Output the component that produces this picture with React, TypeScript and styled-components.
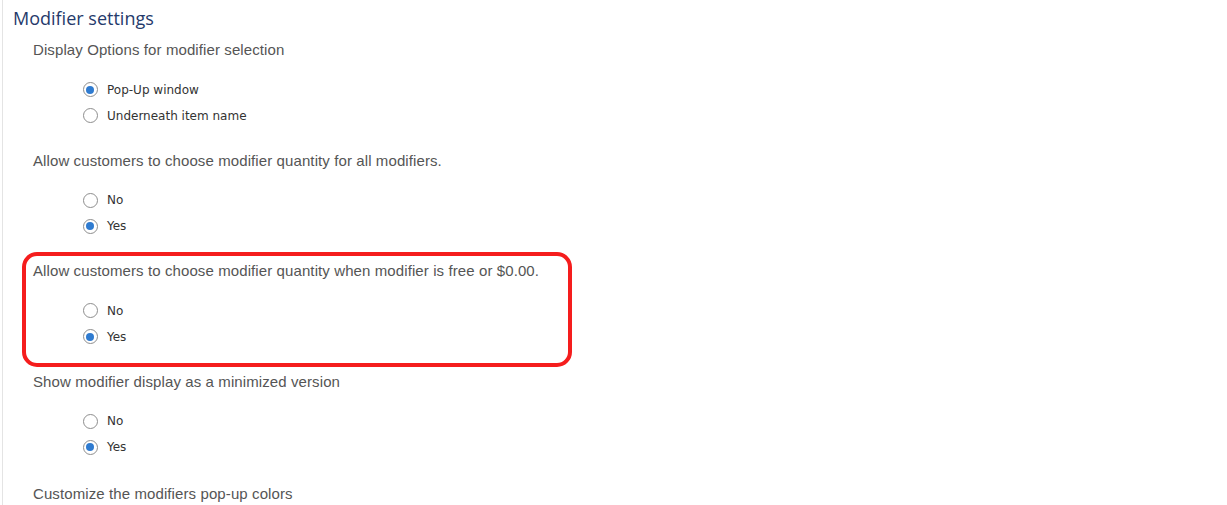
import React from "react";
import styled, { createGlobalStyle } from "styled-components";

const Global = createGlobalStyle`
  html, body { margin: 0; padding: 0; background: #fff; }
  body { font-family: "Liberation Sans", Arial, sans-serif; }
`;

const Page = styled.div`
  margin-left: 2px;
  border-left: 1px solid #e4e4e4;
  min-height: 505px;
  box-sizing: border-box;
  padding-top: 6px;
`;

const Title = styled.h2`
  margin: 0 0 10px 10px;
  font-family: "Open Sans", "Noto Sans", sans-serif;
  font-weight: 400;
  font-size: 18px;
  line-height: 24px;
  color: #253a6b;
`;

const List = styled.div`
  display: flex;
  flex-direction: column;
  gap: 22px;
  margin-left: 30px;
`;

const Section = styled.section<{ $highlight?: boolean }>`
  position: relative;
  width: 520px;
  &:last-child {
    margin-top: 1.5px;
  }
  &::after {
    content: "";
    display: ${(p) => (p.$highlight ? "block" : "none")};
    position: absolute;
    left: -11px;
    top: -9px;
    bottom: -17px;
    width: 550px;
    box-sizing: border-box;
    border: 4px solid #f51d1d;
    border-radius: 15px;
    pointer-events: none;
  }
`;

const Question = styled.div`
  font-size: 15px;
  letter-spacing: 0.1px;
  line-height: 20px;
  color: #555;
  white-space: nowrap;
`;

const Options = styled.div`
  margin-top: 16.5px;
  margin-left: 49.5px;
  display: flex;
  flex-direction: column;
`;

const Option = styled.label`
  display: flex;
  align-items: center;
  height: 26px;
  gap: 9.5px;
  font-family: "DejaVu Sans", Verdana, sans-serif;
  font-size: 12px;
  color: #333;
`;

const Dot = styled.span<{ $checked?: boolean }>`
  width: 15px;
  height: 15px;
  box-sizing: border-box;
  border-radius: 50%;
  border: 1px solid #8e8e8e;
  background: #fff;
  display: flex;
  align-items: center;
  justify-content: center;
  &::after {
    content: "";
    width: 8px;
    height: 8px;
    border-radius: 50%;
    background: #2f7bd0;
    display: ${(p) => (p.$checked ? "block" : "none")};
  }
`;

type Q = { text: string; options: string[]; checked: number; highlight?: boolean };

const questions: Q[] = [
  { text: "Display Options for modifier selection", options: ["Pop-Up window", "Underneath item name"], checked: 0 },
  { text: "Allow customers to choose modifier quantity for all modifiers.", options: ["No", "Yes"], checked: 1 },
  {
    text: "Allow customers to choose modifier quantity when modifier is free or $0.00.",
    options: ["No", "Yes"],
    checked: 1,
    highlight: true,
  },
  { text: "Show modifier display as a minimized version", options: ["No", "Yes"], checked: 1 },
  { text: "Customize the modifiers pop-up colors", options: [], checked: -1 },
];

export default function App() {
  return (
    <>
      <Global />
      <Page>
        <Title>Modifier settings</Title>
        <List>
          {questions.map((q, i) => (
            <Section key={i} $highlight={q.highlight}>
              <Question>{q.text}</Question>
              {q.options.length > 0 && (
                <Options>
                  {q.options.map((o, j) => (
                    <Option key={j}>
                      <Dot $checked={j === q.checked} />
                      {o}
                    </Option>
                  ))}
                </Options>
              )}
            </Section>
          ))}
        </List>
      </Page>
    </>
  );
}
